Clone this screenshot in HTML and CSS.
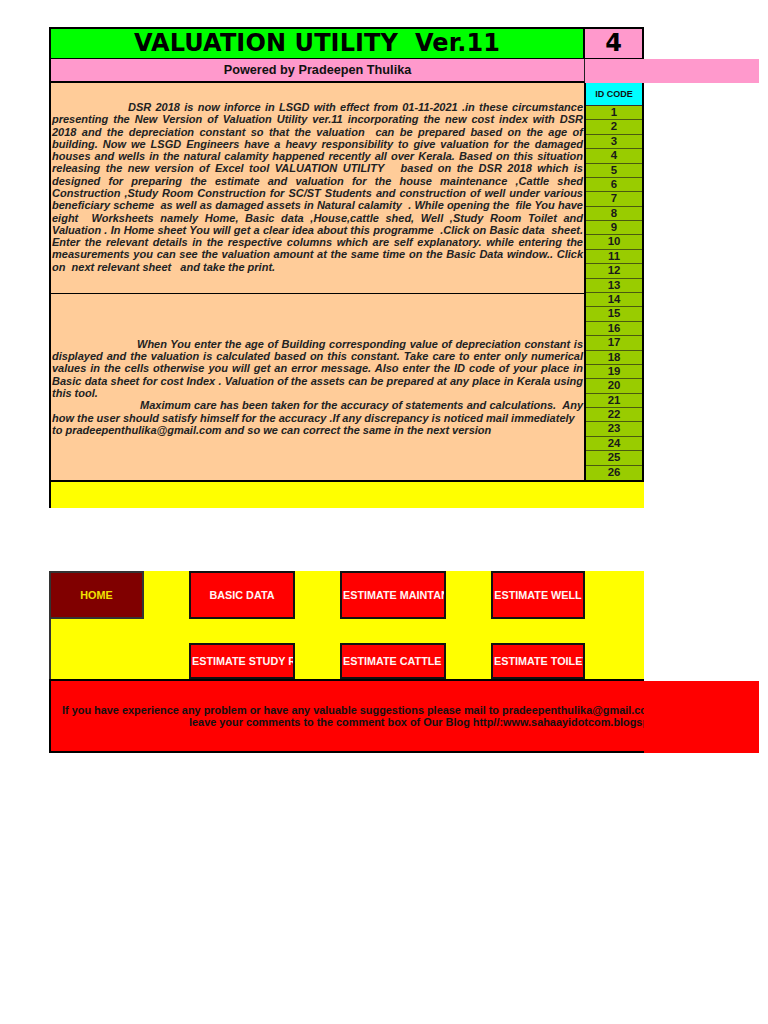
FILE: index.html
```html
<!DOCTYPE html>
<html>
<head>
<meta charset="utf-8">
<title>Valuation Utility Ver.11</title>
<link rel="stylesheet" href="styles.css">
</head>
<body>
<div class="sheet">
  <div class="title">VALUATION UTILITY&nbsp; Ver.11</div>
  <div class="four">4</div>
  <div class="blank"></div>
  <div class="sub">Powered by Pradeepen Thulika</div>
  <div class="subx"></div>
  <div class="notes">
    <div class="note n1">
      <div class="para">
        <span class="ln first">DSR 2018 is now inforce in LSGD with effect from 01-11-2021 .in these circumstance</span>
        <span class="ln">presenting the New Version of Valuation Utility ver.11 incorporating the new cost index with DSR</span>
        <span class="ln">2018 and the depreciation constant so that the valuation&nbsp; can be prepared based on the age of</span>
        <span class="ln">building. Now we LSGD Engineers have a heavy responsibility to give valuation for the damaged</span>
        <span class="ln">houses and wells in the natural calamity happened recently all over Kerala. Based on this situation</span>
        <span class="ln">releasing the new version of Excel tool VALUATION UTILITY&nbsp;&nbsp; based on the DSR 2018 which is</span>
        <span class="ln">designed for preparing the estimate and valuation for the house maintenance ,Cattle shed</span>
        <span class="ln">Construction ,Study Room Construction for SC/ST Students and construction of well under various</span>
        <span class="ln">beneficiary scheme&nbsp; as well as damaged assets in Natural calamity&nbsp; . While opening the&nbsp; file You have</span>
        <span class="ln">eight&nbsp; Worksheets namely Home, Basic data ,House,cattle shed, Well ,Study Room Toilet and</span>
        <span class="ln">Valuation . In Home sheet You will get a clear idea about this programme&nbsp; .Click on Basic data&nbsp; sheet.</span>
        <span class="ln">Enter the relevant details in the respective columns which are self explanatory. while entering the</span>
        <span class="ln">measurements you can see the valuation amount at the same time on the Basic Data window.. Click</span>
        <span class="ln end">on&nbsp; next relevant sheet&nbsp;&nbsp; and take the print.</span>
      </div>
    </div>
    <div class="note n2">
      <div class="para">
        <span class="ln first2">When You enter the age of Building corresponding value of depreciation constant is</span>
        <span class="ln">displayed and the valuation is calculated based on this constant. Take care to enter only numerical</span>
        <span class="ln">values in the cells otherwise you will get an error message. Also enter the ID code of your place in</span>
        <span class="ln">Basic data sheet for cost Index . Valuation of the assets can be prepared at any place in Kerala using</span>
        <span class="ln end">this tool.</span>
        <span class="ln first3">Maximum care has been taken for the accuracy of statements and calculations.&nbsp; Any</span>
        <span class="ln end">how the user should satisfy himself for the accuracy .If any discrepancy is noticed mail immediately</span>
        <span class="ln end">to pradeepenthulika@gmail.com and so we can correct the same in the next version</span>
      </div>
    </div>
  </div>
  <div class="ids">
    <div class="idhead">ID CODE</div>
    <div class="id">1</div><div class="id">2</div><div class="id">3</div><div class="id">4</div>
    <div class="id">5</div><div class="id">6</div><div class="id">7</div><div class="id">8</div>
    <div class="id">9</div><div class="id">10</div><div class="id">11</div><div class="id">12</div>
    <div class="id">13</div><div class="id">14</div><div class="id">15</div><div class="id">16</div>
    <div class="id">17</div><div class="id">18</div><div class="id">19</div><div class="id">20</div>
    <div class="id">21</div><div class="id">22</div><div class="id">23</div><div class="id">24</div>
    <div class="id">25</div><div class="id">26</div>
  </div>
  <div class="yellowrow"></div>
</div>

<div class="panel">
  <div class="btn home">HOME</div>
  <div class="btn">BASIC DATA</div>
  <div class="btn">ESTIMATE MAINTANANCE</div>
  <div class="btn">ESTIMATE WELL</div>
  <div class="btn r2c2">ESTIMATE STUDY ROOM</div>
  <div class="btn r2c3">ESTIMATE CATTLE SHED</div>
  <div class="btn r2c4">ESTIMATE TOILET</div>
</div>

<div class="footer">
  <div class="fmain">
    <div class="fl l1">If you have experience any problem or have any valuable suggestions please mail to pradeepenthulika@gmail.com or</div>
    <div class="fl l2">leave your comments to the comment box of Our Blog http//:www.sahaayidotcom.blogspot.com</div>
  </div>
  <div class="fext"></div>
</div>
</body>
</html>
```

FILE: styles.css
```css
* { box-sizing: border-box; }
html, body { margin: 0; padding: 0; background: #ffffff; }
body { font-family: "Liberation Sans", Arial, sans-serif; color: #111; }

.sheet {
  margin: 27px 0 0 49px;
  display: grid;
  grid-template-columns: 536px 59px 115px;
  grid-template-rows: 32px 24px 397px 28px;
}

.title {
  background: #00ff00;
  border-top: 2px solid #000;
  border-left: 2px solid #000;
  border-right: 2px solid #000;
  border-bottom: 1px solid #000;
  font-family: "DejaVu Sans", sans-serif;
  font-weight: bold;
  font-size: 24px;
  letter-spacing: 0.1px;
  line-height: 28px;
  text-align: center;
  color: #000;
}
.four {
  background: #ff99cc;
  border-top: 2px solid #000;
  border-right: 2px solid #000;
  border-bottom: 1px solid #000;
  font-family: "DejaVu Sans", sans-serif;
  font-weight: bold;
  font-size: 24px;
  line-height: 28px;
  text-align: center;
  color: #000;
}
.blank { background: transparent; }

.sub {
  background: #ff99cc;
  border-left: 2px solid #000;
  border-right: 1px solid #222;
  border-bottom: 2px solid #000;
  font-weight: bold;
  font-size: 12.7px;
  line-height: 22px;
  text-align: center;
  color: #111;
}
.subx {
  grid-column: 2 / 4;
  background: #ff99cc;
}

.notes {
  display: flex;
  flex-direction: column;
  border-left: 2px solid #000;
}
.note {
  background: #ffcc99;
  display: flex;
  align-items: center;
  padding: 0 2px 0 1px;
}
.n1 { height: 211px; border-bottom: 1px solid #000; padding-bottom: 2px; }
.n2 { flex: 1; }
.para {
  width: 100%;
  font-weight: bold;
  font-style: italic;
  font-size: 11px;
  line-height: 12.3px;
  color: #222;
}
.ln {
  display: block;
  white-space: nowrap;
  text-align: justify;
  text-align-last: justify;
}
.ln.end { text-align-last: left; }
.ln.first { padding-left: 76px; }
.ln.first2 { padding-left: 85px; }
.ln.first3 { padding-left: 88px; }

.ids {
  display: grid;
  grid-template-rows: 23px repeat(26, 1fr);
  border-left: 2px solid #000;
  border-right: 2px solid #000;
  margin-left: -1px;
}
.idhead {
  background: #00ffff;
  border-bottom: 1px solid #333;
  font-weight: bold;
  font-size: 9px;
  line-height: 22px;
  text-align: center;
  color: #111;
}
.id {
  background: #99cc00;
  border-bottom: 1px solid #4a5a10;
  font-weight: bold;
  font-size: 11.4px;
  line-height: 13px;
  text-align: center;
  color: #1a1a1a;
}
.id:last-child { border-bottom: none; }

.yellowrow {
  grid-column: 1 / 3;
  background: #ffff00;
  border-top: 2px solid #000;
  border-left: 2px solid #000;
}

.panel {
  margin: 63px 0 0 49px;
  width: 595px;
  height: 108px;
  background: #ffff00;
  border-left: 2px solid #333;
  display: grid;
  grid-template-columns: 93px 106px 106px 94px;
  grid-template-rows: 48px 36px;
  column-gap: 45px;
  row-gap: 24px;
}
.btn {
  background: #ff0000;
  border: 2px solid #111;
  color: #fff4f4;
  font-weight: bold;
  font-size: 10.8px;
  white-space: nowrap;
  overflow: hidden;
  text-align: center;
  padding: 0 1px;
  line-height: 44px;
}
.btn.r2c2, .btn.r2c3, .btn.r2c4 { line-height: 32px; }
.home {
  background: #800000;
  color: #f2e200;
  border-color: #333;
  margin-left: -2px;
}
.r2c2 { grid-column: 2; grid-row: 2; }
.r2c3 { grid-column: 3; grid-row: 2; }
.r2c4 { grid-column: 4; grid-row: 2; }

.footer {
  margin-left: 49px;
  display: flex;
  align-items: flex-start;
}
.fmain {
  width: 595px;
  height: 74px;
  background: #ff0000;
  border-left: 2px solid #000;
  border-top: 2px solid #000;
  border-bottom: 2px solid #000;
  overflow: hidden;
  display: flex;
  flex-direction: column;
  justify-content: center;
}
.fl {
  white-space: nowrap;
  font-weight: bold;
  font-size: 10.9px;
  line-height: 12.3px;
  color: #111;
}
.l1 { padding-left: 11px; }
.l2 { padding-left: 138px; }
.fext {
  width: 115px;
  height: 72px;
  margin-top: 2px;
  background: #ff0000;
}
```
